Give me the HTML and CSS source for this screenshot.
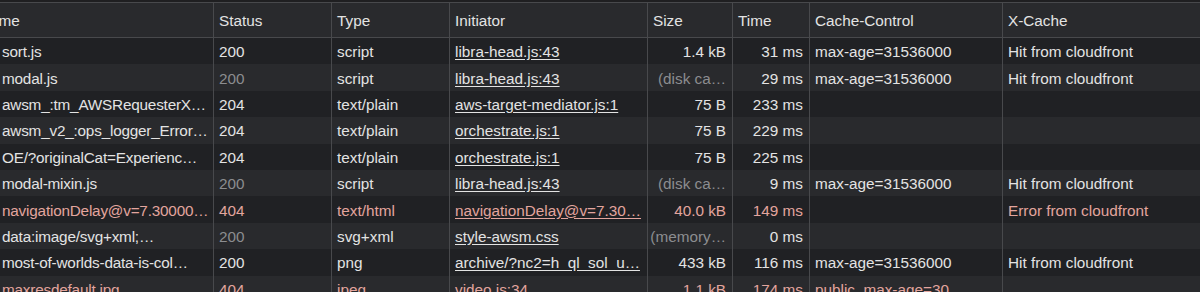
FILE: index.html
```html
<!DOCTYPE html>
<html lang="en">
<head>
  <meta charset="UTF-8">
  <title>Network</title>
  <link rel="stylesheet" href="styles.css">
</head>
<body>
  <div class="panel">
    <div class="grid">
      <div class="row head">
        <div class="cell name">Name</div>
        <div class="cell">Status</div>
        <div class="cell">Type</div>
        <div class="cell">Initiator</div>
        <div class="cell">Size</div>
        <div class="cell">Time</div>
        <div class="cell">Cache-Control</div>
        <div class="cell">X-Cache</div>
      </div>

      <div class="row">
        <div class="cell name">sort.js</div>
        <div class="cell">200</div>
        <div class="cell">script</div>
        <div class="cell"><a>libra-head.js:43</a></div>
        <div class="cell num">1.4 kB</div>
        <div class="cell num">31 ms</div>
        <div class="cell">max-age=31536000</div>
        <div class="cell">Hit from cloudfront</div>
      </div>

      <div class="row odd">
        <div class="cell name">modal.js</div>
        <div class="cell dim">200</div>
        <div class="cell">script</div>
        <div class="cell"><a>libra-head.js:43</a></div>
        <div class="cell num dim">(disk ca…</div>
        <div class="cell num">29 ms</div>
        <div class="cell">max-age=31536000</div>
        <div class="cell">Hit from cloudfront</div>
      </div>

      <div class="row">
        <div class="cell name">awsm_:tm_AWSRequesterX…</div>
        <div class="cell">204</div>
        <div class="cell">text/plain</div>
        <div class="cell"><a>aws-target-mediator.js:1</a></div>
        <div class="cell num">75 B</div>
        <div class="cell num">233 ms</div>
        <div class="cell"></div>
        <div class="cell"></div>
      </div>

      <div class="row odd">
        <div class="cell name">awsm_v2_:ops_logger_Error…</div>
        <div class="cell">204</div>
        <div class="cell">text/plain</div>
        <div class="cell"><a>orchestrate.js:1</a></div>
        <div class="cell num">75 B</div>
        <div class="cell num">229 ms</div>
        <div class="cell"></div>
        <div class="cell"></div>
      </div>

      <div class="row">
        <div class="cell name">OE/?originalCat=Experienc…</div>
        <div class="cell">204</div>
        <div class="cell">text/plain</div>
        <div class="cell"><a>orchestrate.js:1</a></div>
        <div class="cell num">75 B</div>
        <div class="cell num">225 ms</div>
        <div class="cell"></div>
        <div class="cell"></div>
      </div>

      <div class="row odd">
        <div class="cell name">modal-mixin.js</div>
        <div class="cell dim">200</div>
        <div class="cell">script</div>
        <div class="cell"><a>libra-head.js:43</a></div>
        <div class="cell num dim">(disk ca…</div>
        <div class="cell num">9 ms</div>
        <div class="cell">max-age=31536000</div>
        <div class="cell">Hit from cloudfront</div>
      </div>

      <div class="row error">
        <div class="cell name">navigationDelay@v=7.30000…</div>
        <div class="cell">404</div>
        <div class="cell">text/html</div>
        <div class="cell"><a>navigationDelay@v=7.30…</a></div>
        <div class="cell num">40.0 kB</div>
        <div class="cell num">149 ms</div>
        <div class="cell"></div>
        <div class="cell">Error from cloudfront</div>
      </div>

      <div class="row odd">
        <div class="cell name">data:image/svg+xml;…</div>
        <div class="cell dim">200</div>
        <div class="cell">svg+xml</div>
        <div class="cell"><a>style-awsm.css</a></div>
        <div class="cell num dim">(memory…</div>
        <div class="cell num">0 ms</div>
        <div class="cell"></div>
        <div class="cell"></div>
      </div>

      <div class="row">
        <div class="cell name">most-of-worlds-data-is-col…</div>
        <div class="cell">200</div>
        <div class="cell">png</div>
        <div class="cell"><a>archive/?nc2=h_ql_sol_u…</a></div>
        <div class="cell num">433 kB</div>
        <div class="cell num">116 ms</div>
        <div class="cell">max-age=31536000</div>
        <div class="cell">Hit from cloudfront</div>
      </div>

      <div class="row odd error">
        <div class="cell name">maxresdefault.jpg</div>
        <div class="cell">404</div>
        <div class="cell">jpeg</div>
        <div class="cell"><a>video.js:34</a></div>
        <div class="cell num">1.1 kB</div>
        <div class="cell num">174 ms</div>
        <div class="cell">public, max-age=30</div>
        <div class="cell"></div>
      </div>
    </div>
  </div>
</body>
</html>
```

FILE: styles.css
```css
* {
  box-sizing: border-box;
}

body {
  margin: 0;
  padding: 0;
  background: #1f1f21;
  font-family: 'Liberation Sans', Arial, sans-serif;
  font-size: 15.3px;
  color: #e3e3e3;
  overflow: hidden;
}

.panel {
  padding-top: 2px;
  overflow: hidden;
  height: 292px;
}

.grid {
  margin-left: -26px;
  width: 1260px;
  border-top: 1px solid #48494c;
}

.row {
  display: grid;
  grid-template-columns: 240px 118px 118px 198px 85px 77px 193px 1fr;
  height: 26.4px;
  background: #202124;
}

.row.odd {
  background: #292a2d;
}

.row.head {
  height: 35px;
  background: #292a2d;
  border-bottom: 1px solid #48494c;
}

.cell {
  padding: 2px 5px 0;
  border-right: 1px solid #48494c;
  white-space: nowrap;
  overflow: hidden;
  text-overflow: ellipsis;
  display: flex;
  align-items: center;
}

.cell:last-child {
  border-right: none;
}

.row .name {
  padding-left: 28px;
  letter-spacing: -0.2px;
}

.row.head .name {
  padding-left: 5px;
  letter-spacing: 0;
}

.num {
  justify-content: flex-end;
  padding-right: 6px;
}

.cell a {
  color: inherit;
  text-decoration: underline;
  text-underline-offset: 2px;
}

.dim {
  color: #8c8d90;
}

.error .cell {
  color: #e3a59e;
}
```
